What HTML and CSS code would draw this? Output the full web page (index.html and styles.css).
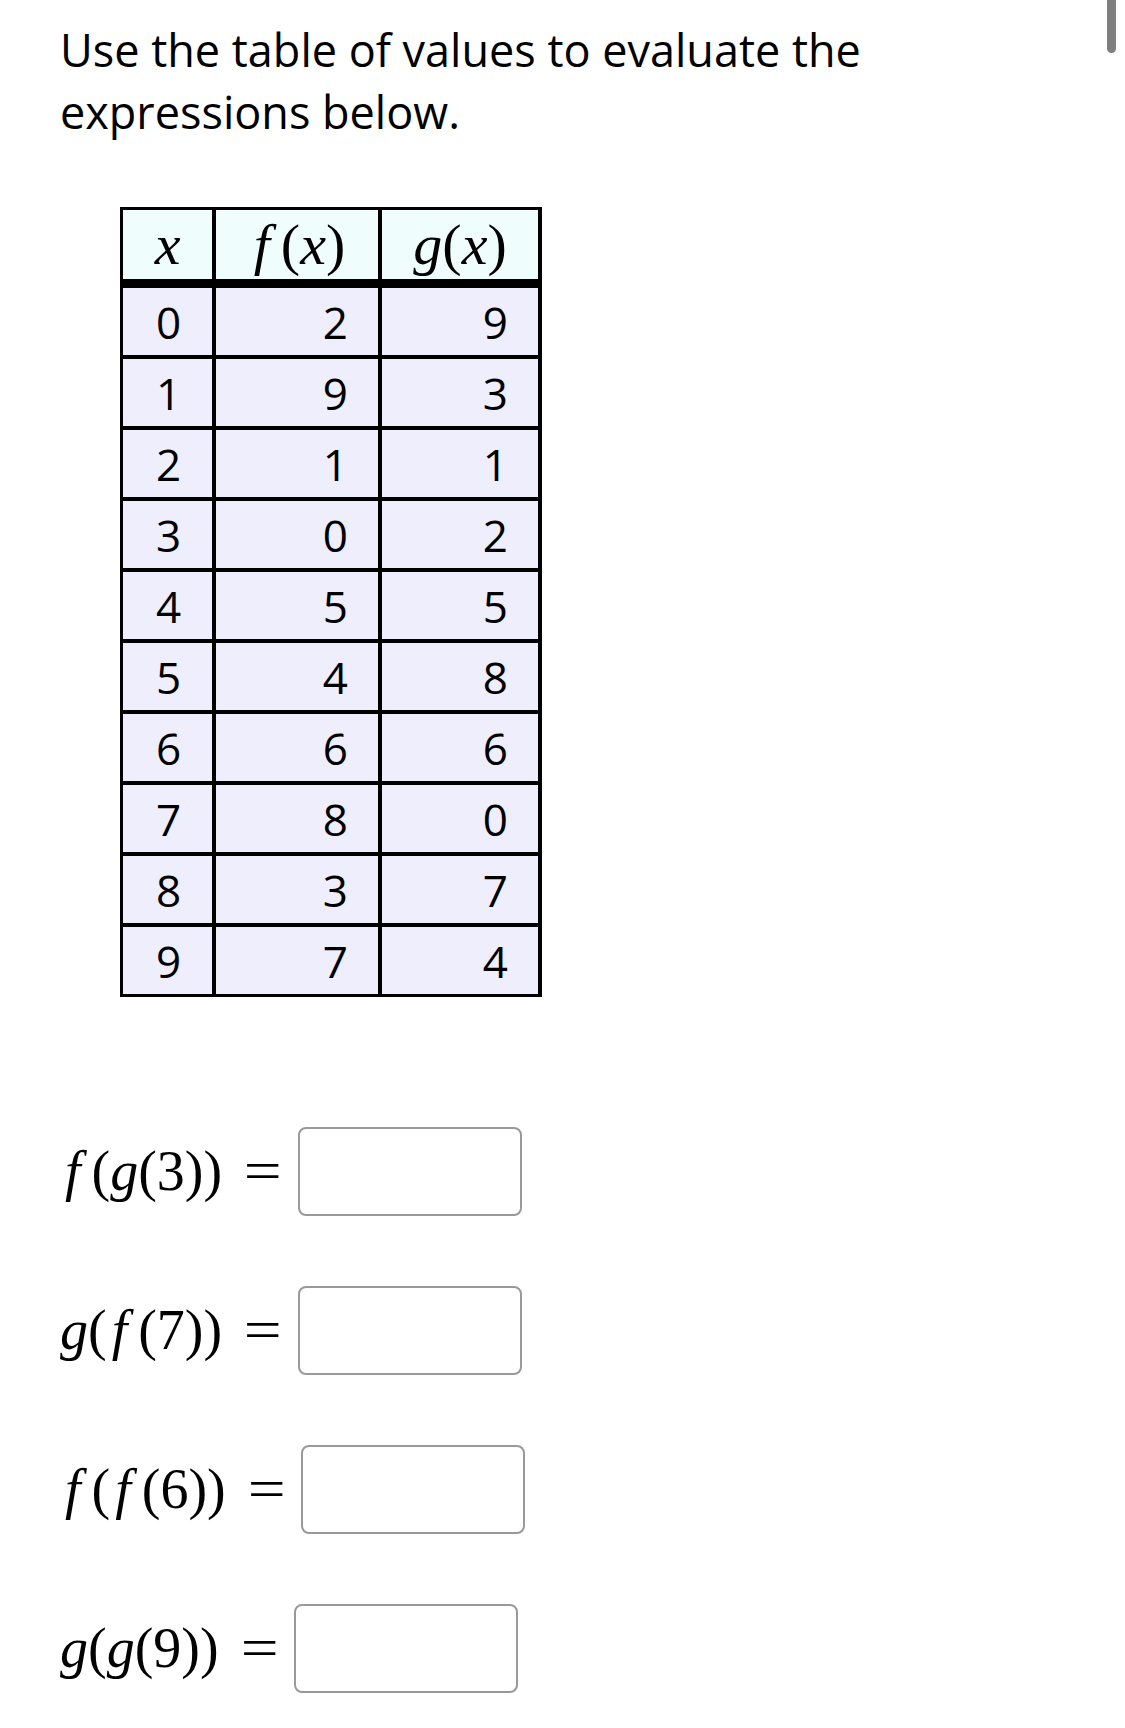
FILE: index.html
```html
<!DOCTYPE html>
<html lang="en">
<head>
<meta charset="utf-8">
<title>Table of values</title>
<link rel="stylesheet" href="styles.css">
</head>
<body>
<div class="scroll-thumb"></div>
<main class="page">
  <p class="prompt">Use the table of values to evaluate the expressions below.</p>

  <div class="values">
    <div class="cell head"><span class="mi">x</span></div>
    <div class="cell head"><span class="mi f">f</span>(<span class="mi">x</span>)</div>
    <div class="cell head"><span class="mi">g</span>(<span class="mi">x</span>)</div>

    <div class="cell c">0</div><div class="cell r">2</div><div class="cell r">9</div>
    <div class="cell c">1</div><div class="cell r">9</div><div class="cell r">3</div>
    <div class="cell c">2</div><div class="cell r">1</div><div class="cell r">1</div>
    <div class="cell c">3</div><div class="cell r">0</div><div class="cell r">2</div>
    <div class="cell c">4</div><div class="cell r">5</div><div class="cell r">5</div>
    <div class="cell c">5</div><div class="cell r">4</div><div class="cell r">8</div>
    <div class="cell c">6</div><div class="cell r">6</div><div class="cell r">6</div>
    <div class="cell c">7</div><div class="cell r">8</div><div class="cell r">0</div>
    <div class="cell c">8</div><div class="cell r">3</div><div class="cell r">7</div>
    <div class="cell c">9</div><div class="cell r">7</div><div class="cell r">4</div>
  </div>

  <div class="questions">
    <div class="q">
      <span class="math"><span class="mi f">f</span>(<span class="mi">g</span>(3))<span class="eq">=</span></span>
      <div class="answer"></div>
    </div>
    <div class="q">
      <span class="math"><span class="mi">g</span>(<span class="mi f">f</span>(7))<span class="eq">=</span></span>
      <div class="answer"></div>
    </div>
    <div class="q">
      <span class="math"><span class="mi f">f</span>(<span class="mi f">f</span>(6))<span class="eq">=</span></span>
      <div class="answer"></div>
    </div>
    <div class="q">
      <span class="math"><span class="mi">g</span>(<span class="mi">g</span>(9))<span class="eq">=</span></span>
      <div class="answer"></div>
    </div>
  </div>
</main>
</body>
</html>
```

FILE: styles.css
```css
html, body {
  margin: 0;
  padding: 0;
  background: #ffffff;
}

body {
  font-family: "Open Sans", "Noto Sans", sans-serif;
  color: #000000;
}

.scroll-thumb {
  position: fixed;
  top: 0;
  right: 9px;
  width: 9px;
  height: 53px;
  background: #7f7f7f;
  border-radius: 0 0 5px 5px;
}

.page {
  padding: 19px 0 0 60px;
}

.prompt {
  margin: 0;
  width: 830px;
  font-size: 45px;
  line-height: 62px;
}

.values {
  margin: 64px 0 0 60px;
  display: grid;
  grid-template-columns: 89px 162px 156px;
  grid-template-rows: 74px repeat(10, 67px);
  column-gap: 4px;
  row-gap: 4px;
  padding: 3px 4px 3px 3px;
  width: max-content;
  background: #000000;
}

.cell {
  background: #eeeefc;
  font-size: 44px;
  display: flex;
  align-items: center;
}

.cell.c {
  justify-content: center;
  padding-left: 2px;
}

.cell.r {
  justify-content: flex-end;
  padding-right: 30px;
}

.cell.head {
  background: #effdfd;
  justify-content: center;
  font-family: "Liberation Serif", "Times New Roman", serif;
  font-size: 58px;
  height: 69px;
  margin-bottom: 5px;
  align-self: start;
  padding-left: 0;
}

.mi {
  font-family: "Liberation Serif", "Times New Roman", serif;
  font-style: italic;
}

.mi.f {
  padding: 0 11px 0 5px;
}

.questions {
  margin-top: 130px;
  display: flex;
  flex-direction: column;
  gap: 70px;
}

.q {
  display: flex;
  align-items: flex-start;
}

.math {
  font-family: "Liberation Serif", "Times New Roman", serif;
  font-size: 56px;
  line-height: 89px;
  white-space: nowrap;
}

.eq {
  font-style: normal;
  display: inline-block;
  transform: scaleX(1.2);
  margin: 0 19px 0 25px;
}

.answer {
  width: 220px;
  height: 85px;
  border: 2px solid #999999;
  border-radius: 8px;
  background: #ffffff;
}
```
